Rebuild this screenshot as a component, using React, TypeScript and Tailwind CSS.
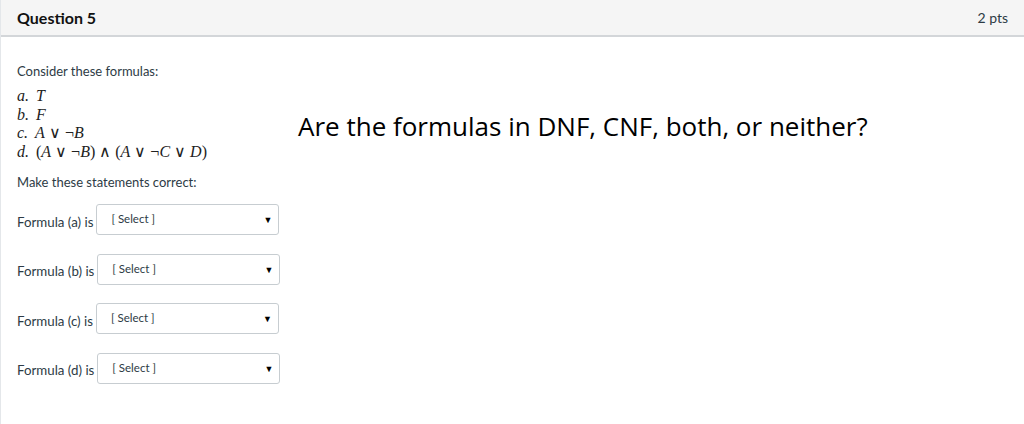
import React from 'react';

const formulas: { label: string; expr: React.ReactNode }[] = [
    { label: 'a.', expr: <i>T</i> },
    { label: 'b.', expr: <i>F</i> },
    {
        label: 'c.',
        expr: (
            <>
                <i>A</i> ∨ ¬<i>B</i>
            </>
        ),
    },
    {
        label: 'd.',
        expr: (
            <>
                (<i>A</i> ∨ ¬<i>B</i>) ∧ (<i>A</i> ∨ ¬<i>C</i> ∨ <i>D</i>)
            </>
        ),
    },
];

const SelectRow: React.FC<{ letter: string }> = ({ letter }) => (
    <div className="flex items-center h-[31px]">
        <span className="text-[13.3px] text-[#2d3b45] mr-[3px] mt-[6px]">Formula ({letter}) is</span>
        <div className="relative w-[183px] h-[31px] border border-[#c7cdd1] rounded-[3px] bg-white">
            <span className="absolute left-[14px] top-[5px] text-[11.5px] text-[#2d3b45]">[ Select ]</span>
            <span className="absolute right-[6px] top-[8px] text-[9px] text-black">▼</span>
        </div>
    </div>
);

export default function App() {
    return (
        <div className="relative w-[1024px] h-[424px] bg-white overflow-hidden" style={{ fontFamily: 'Lato, "Liberation Sans", sans-serif' }}>
            <div className="border-l border-[#e4e7ea] h-full">
                <div className="flex items-center justify-between h-[37px] bg-[#f5f5f5] border-b-2 border-[#d3d6d9] pl-[16px] pr-[16px]">
                    <span className="text-[16px] font-bold text-[#111]">Question 5</span>
                    <span className="text-[14px] text-[#2d3b45]">2 pts</span>
                </div>
                <div className="pl-[16px] pt-[25px] text-[#2d3b45]">
                    <p className="text-[13px] leading-[18px]">Consider these formulas:</p>
                    <div className="mt-[7px] text-[16px] leading-[18.5px] text-[#222]" style={{ fontFamily: '"Liberation Serif", serif' }}>
                        {formulas.map((f) => (
                            <div key={f.label} className="flex gap-[7px] italic">
                                <span>{f.label}</span>
                                <span className="not-italic">{f.expr}</span>
                            </div>
                        ))}
                    </div>
                    <p className="text-[13px] leading-[18px] mt-[12px]">Make these statements correct:</p>
                    <div className="mt-[13px] flex flex-col gap-[18.5px]">
                        {['a', 'b', 'c', 'd'].map((l) => (
                            <SelectRow key={l} letter={l} />
                        ))}
                    </div>
                </div>
            </div>
            <div
                className="absolute left-[298px] top-[107px] text-[26px] text-black"
                style={{ fontFamily: '"Open Sans", "Noto Sans", sans-serif' }}
            >
                Are the formulas in DNF, CNF, both, or neither?
            </div>
        </div>
    );
}
